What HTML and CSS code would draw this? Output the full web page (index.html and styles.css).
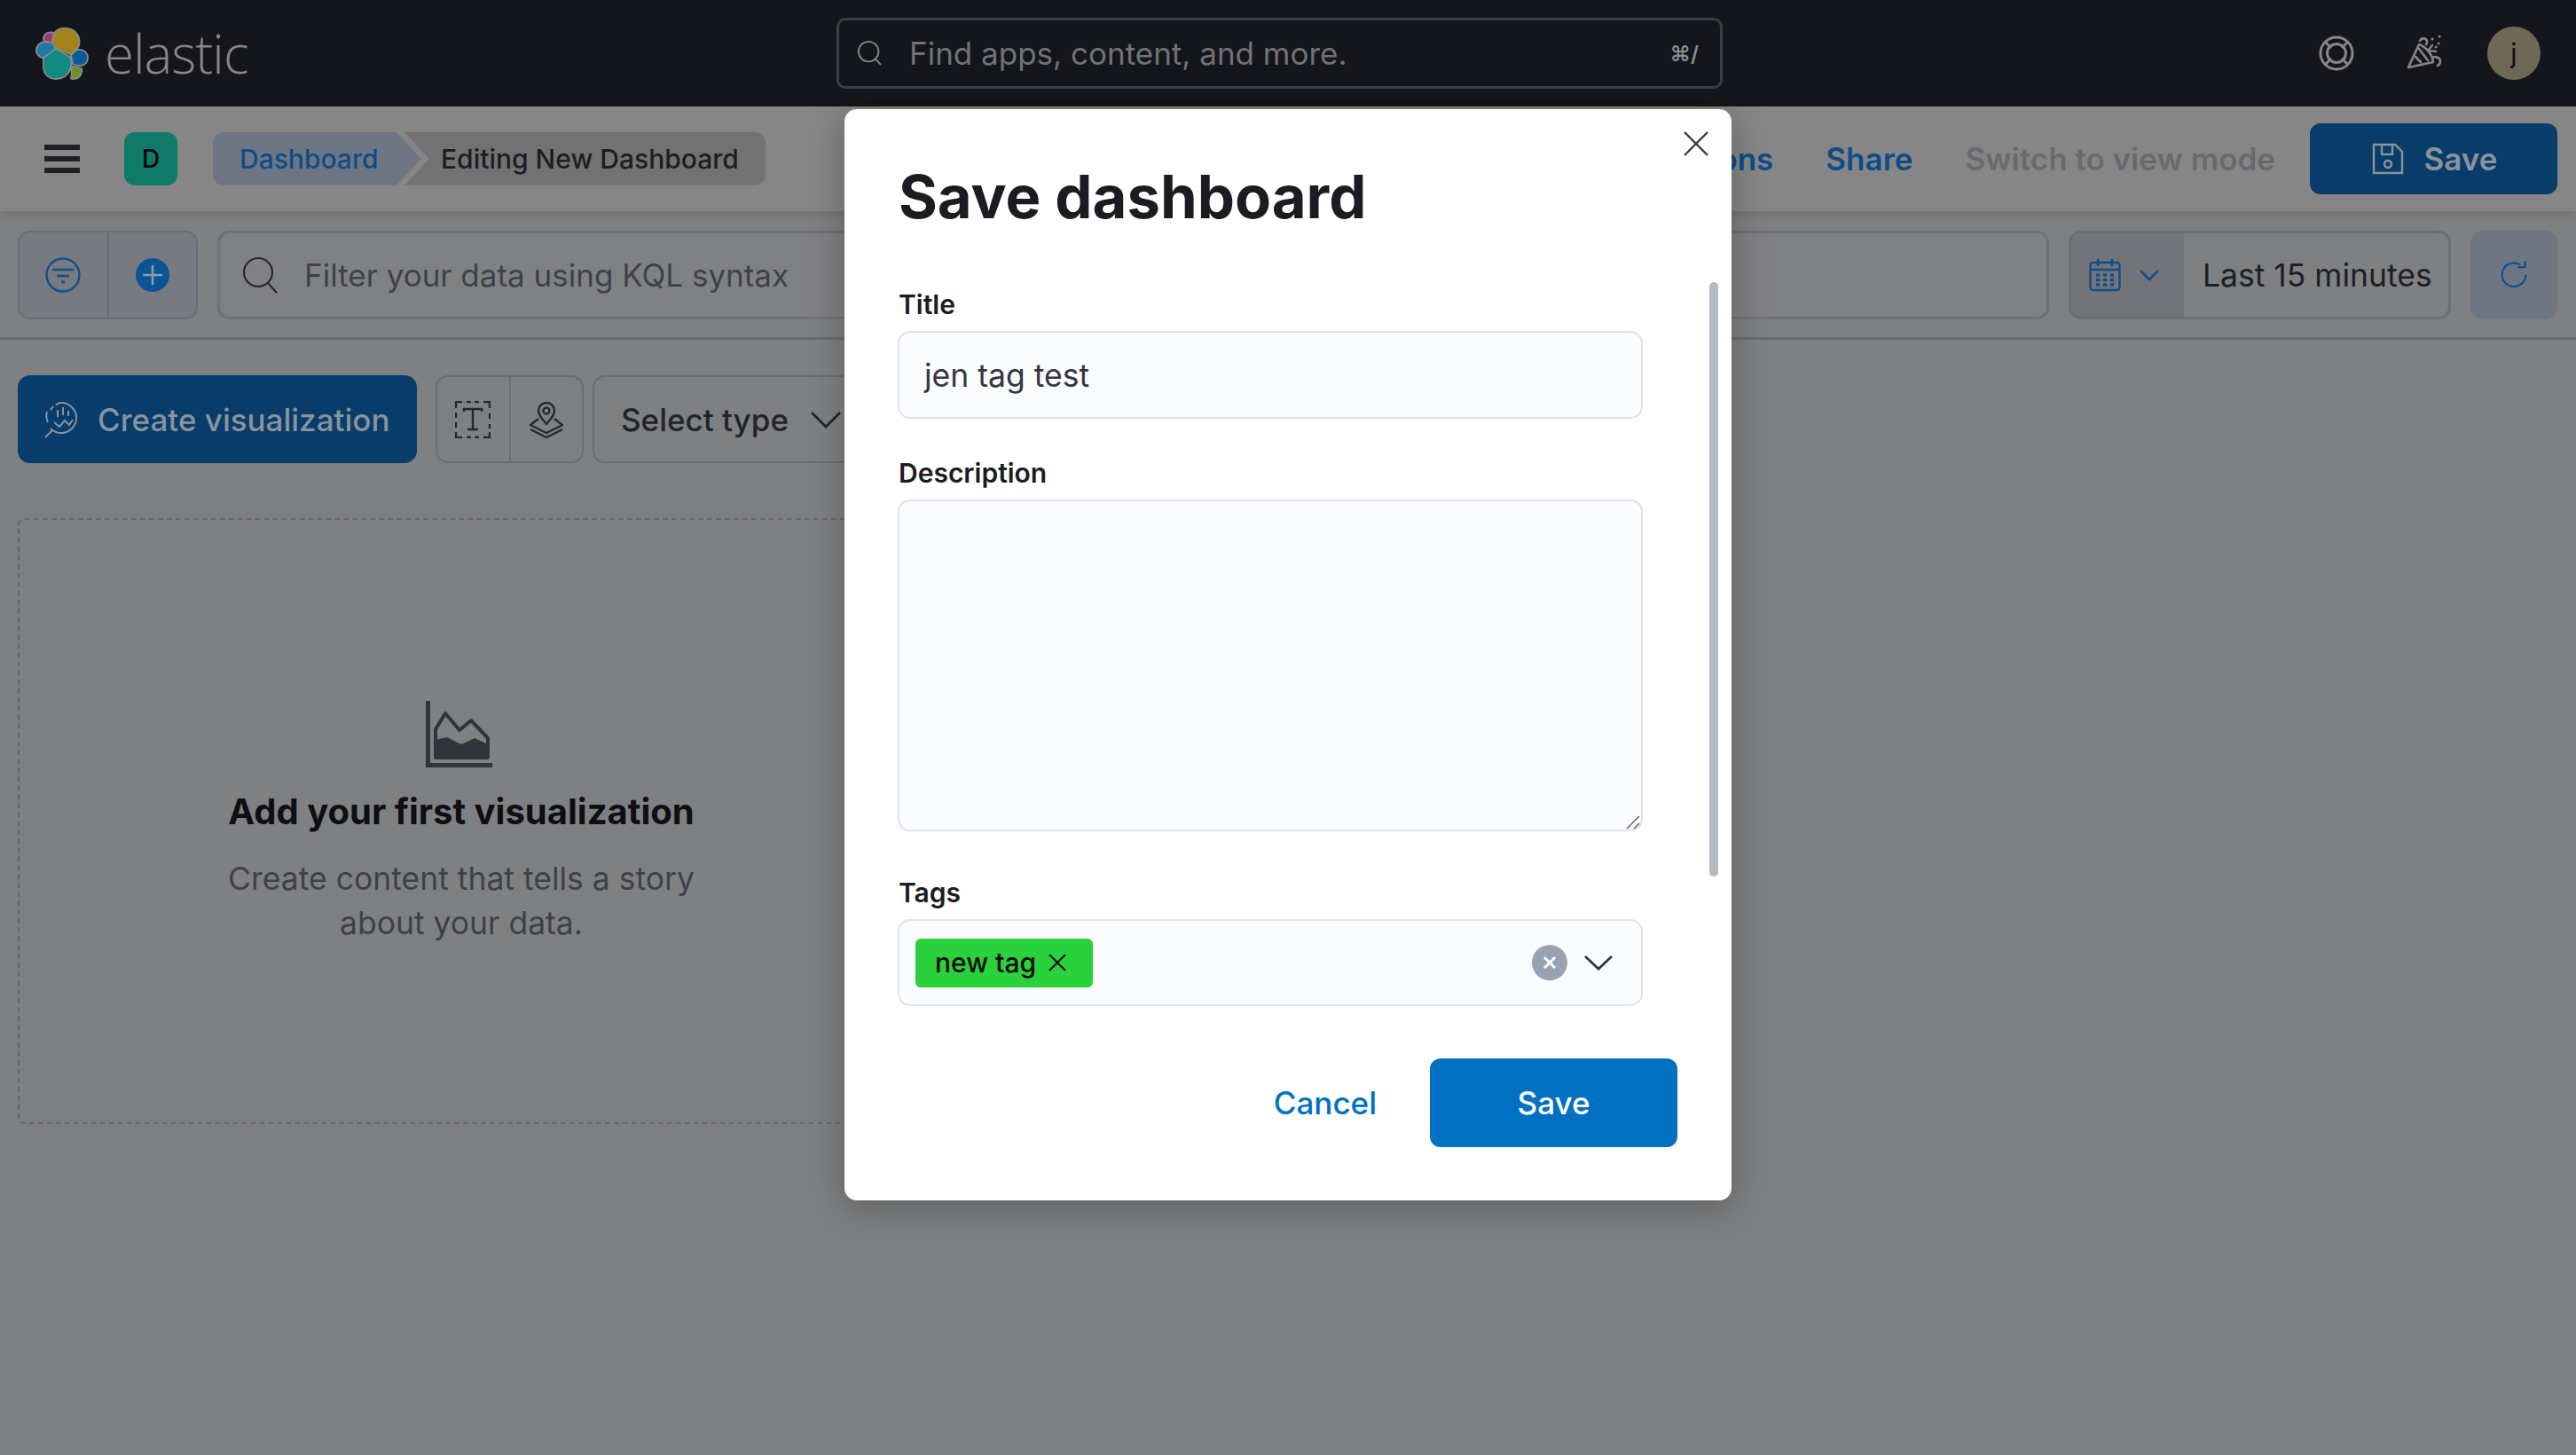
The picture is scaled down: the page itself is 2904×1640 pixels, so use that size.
FILE: index.html
```html
<!DOCTYPE html>
<html lang="en">
<head>
<meta charset="utf-8">
<title>Save dashboard</title>
<link rel="stylesheet" href="styles.css">
</head>
<body>
<header class="topbar">
  <div class="brand">
    <svg class="logo" viewBox="0 0 60 60" width="60" height="60">
      <g stroke="#8a8a8a" stroke-width="1.800" stroke-linejoin="round">
        <path fill="#9c3a78" d="M9 14c0-5 4-8 9-7.500 2 .2 3.500 1 3.500 2-2 3-3 6-3 10-3 .5-6-.5-7.500-1.500C9.500 16 9 15 9 14z"/>
        <path fill="#a5831c" d="M21 8c3-5 9-7 15-6 8 1 14 8 13.500 16-.2 4-2 7-4.500 9l-5 4.500L22 24c-3-5-3-11-1-16z"/>
        <path fill="#1f78a8" d="M1 27c0-6 5-10 10-10 3 0 6 1 9 2l3 6-9 10c-3 1-6 1-9-1-3-2-4-4-4-7z"/>
        <path fill="#0d5a9a" d="M40 32l7-6c6-1 12 3 12 9 0 6-5 10-10 9-3 0-5-1-7-2l-2-10z"/>
        <path fill="#138a80" d="M9 35l14-10 16 9c2 5 2 10 0 15-3 6-9 10-16 10C14 59 9 53 9 45c0-4 0-7 0-10z"/>
        <path fill="#6f9020" d="M40 44l12 3c1 3 0 6-2 9-2 2-5 3-8 3-1 0-2-.5-2-1 1-4 1-9 0-14z"/>
      </g>
    </svg>
    <span class="wordmark">elastic</span>
  </div>
  <div class="global-search">
    <svg class="ico-search-sm" viewBox="0 0 32 32" width="30" height="30" fill="none" stroke="#84868b" stroke-width="2"><circle cx="14" cy="14" r="12"/><path d="M22 23l7 7"/></svg>
    <span class="global-placeholder">Find apps, content, and more.</span>
    <span class="shortcut">⌘/</span>
  </div>
  <div class="top-actions">
    <svg class="help" viewBox="0 0 40 40" width="40" height="40" fill="none" stroke="#868686" stroke-width="3"><circle cx="20" cy="20" r="18"/><circle cx="20" cy="20" r="10.500"/><path d="M7 7l7 7M33 7l-7 7M7 33l7-7M33 33l-7-7"/></svg>
    <svg class="news" viewBox="0 0 42 40" width="42" height="40" fill="none" stroke="#868686" stroke-width="2.600" stroke-linejoin="round" stroke-linecap="round"><path d="M13 10L1 36l28-6c-1-9-8-17-16-20zM9 24l6 6M13 15l10 13"/><path d="M14 6c2-4 7-3 8 0 .5 2 0 3-1 4M32 18l-9-1 5-6M28 25c4-2 9 0 9 4 0 2-1 4-3 5"/><path d="M28 4h.1M36 1h.1M35 9h.1M32 13h.1" stroke-width="3"/></svg>
    <span class="avatar">j</span>
  </div>
</header>

<nav class="appbar">
  <div class="hamburger"><i></i><i></i><i></i></div>
  <span class="space-badge">D</span>
  <div class="crumbs">
    <span class="crumb crumb-link">Dashboard</span>
    <span class="crumb crumb-current">Editing New Dashboard</span>
  </div>
  <div class="app-actions">
    <span class="link">Options</span>
    <span class="link">Share</span>
    <span class="link link-muted">Switch to view mode</span>
    <span class="btn-save">
      <svg viewBox="0 0 36 36" width="36" height="36" fill="none" stroke="#89939c" stroke-width="2.400"><path d="M2 2h24l8 8v24H2z"/><path d="M11 2v11h12V2"/><circle cx="18" cy="24" r="4"/></svg>
      Save
    </span>
  </div>
</nav>

<section class="querybar">
  <div class="filter-group">
    <span class="filter-cell">
      <svg viewBox="0 0 40 40" width="40" height="40" fill="none" stroke="#114f8c" stroke-width="2.400"><circle cx="20" cy="20" r="18.500"/><path d="M8 14h24M13 21h14"/><path d="M18 28h4" stroke-width="3"/></svg>
    </span>
    <span class="filter-cell">
      <svg viewBox="0 0 40 40" width="40" height="40"><circle cx="20" cy="20" r="19" fill="#0a5596"/><path d="M20 9v22M9 20h22" stroke="#8e9aa6" stroke-width="2.600"/></svg>
    </span>
  </div>
  <div class="query-input">
    <svg viewBox="0 0 42 42" width="42" height="42" fill="none" stroke="#26282e" stroke-width="2.200"><circle cx="18" cy="18" r="16"/><path d="M29 30l10 11"/></svg>
    <span class="query-placeholder">Filter your data using KQL syntax</span>
  </div>
  <div class="datepicker">
    <span class="date-quick">
      <svg viewBox="0 0 36 38" width="36" height="38" fill="none" stroke="#0f4e8a" stroke-width="2.400"><rect x="1.500" y="5" width="33" height="31" rx="3"/><path d="M2 13h32M10 1v8M26 1v8"/><path d="M8 19h20M8 24.500h20M8 30h20" stroke-width="3.600" stroke-dasharray="4 4"/></svg>
      <svg viewBox="0 0 24 14" width="24" height="14" fill="none" stroke="#0f4e8a" stroke-width="2.600"><path d="M2 2l10 10L22 2"/></svg>
    </span>
    <span class="date-value">Last 15 minutes</span>
  </div>
  <span class="refresh">
    <svg viewBox="0 0 36 38" width="32" height="36" fill="none" stroke="#0f4e8a" stroke-width="2.400"><path d="M26 6a15 15 0 1 0 7 13"/><path d="M32 1v8H23"/></svg>
  </span>
</section>

<main class="canvas">
  <div class="toolbar">
    <span class="btn-create">
      <svg viewBox="0 0 42 42" width="42" height="42" fill="none" stroke="#89939c" stroke-width="2"><path d="M7 10a17 17 0 0 1 9-7" stroke-dasharray="5 3"/><path d="M15 2.500A17 17 0 1 1 7 31"/><path d="M3 12a17 17 0 0 0 1 12"/><path d="M9 33L1 41"/><path d="M11 24l6 5 6-7 5 5 4-6M15 10v8M21 7v9M27 11v6"/></svg>
      Create visualization
    </span>
    <div class="tool-group">
      <span class="tool-cell">
        <svg viewBox="0 0 40 42" width="40" height="42" fill="none" stroke="#25272d" stroke-width="2.400"><path d="M1 8V1h7M13 1h5M22 1h5M32 1h7v7M39 14v6M39 26v5M39 35v6h-7M27 41h-5M18 41h-5M8 41H1v-6M1 30v-6M1 19v-6"/><path d="M10 12v-3h20v3M20 9v23M14 32h12"/></svg>
      </span>
      <span class="tool-cell">
        <svg viewBox="0 0 40 42" width="40" height="42" fill="none" stroke="#25272d" stroke-width="2.400" stroke-linejoin="round"><path d="M20 26c-5-6-9-10-9-15a9 9 0 0 1 18 0c0 5-4 9-9 15z"/><circle cx="20" cy="11" r="3.500"/><path d="M11 20l-9 7 18 9 18-9-9-7"/><path d="M2 32l18 9 18-9"/></svg>
      </span>
    </div>
    <span class="select-type">
      Select type
      <svg viewBox="0 0 36 20" width="36" height="20" fill="none" stroke="#22242a" stroke-width="2.800"><path d="M2 2l16 16L34 2"/></svg>
    </span>
  </div>
  <div class="dropzone">
    <svg class="empty-icon" viewBox="0 0 75 75" width="75" height="75">
      <path d="M2.500 0v72.500H75" fill="none" stroke="#32343b" stroke-width="5"/>
      <path d="M11 64V32l11-18 16 19 13-11 19 20v22z" fill="none" stroke="#32343b" stroke-width="4" stroke-linejoin="round"/>
      <path d="M11 64V44l13-3 16 8 15-7 15 7v15z" fill="#32343b"/>
    </svg>
    <h2 class="empty-title">Add your first visualization</h2>
    <p class="empty-text">Create content that tells a story<br>about your data.</p>
  </div>
</main>

<div class="modal">
  <svg class="modal-close" viewBox="0 0 28 28" width="28" height="28" fill="none" stroke="#343741" stroke-width="2.400"><path d="M1 1l26 26M27 1L1 27"/></svg>
  <h1 class="modal-title">Save dashboard</h1>
  <div class="scroll-thumb"></div>
  <div class="modal-body">
    <label class="field-label">Title</label>
    <div class="input">jen tag test</div>
    <label class="field-label">Description</label>
    <div class="textarea">
      <svg class="resize" viewBox="0 0 16 16" width="16" height="16" fill="none" stroke="#555" stroke-width="1.300"><path d="M1 15L15 1M9 15l6-6"/></svg>
    </div>
    <label class="field-label">Tags</label>
    <div class="combo">
      <span class="tag">new tag
        <svg viewBox="0 0 20 20" width="20" height="20" fill="none" stroke="#0a0a0a" stroke-width="2"><path d="M1 1l18 18M19 1L1 19"/></svg>
      </span>
      <span class="combo-clear">
        <svg viewBox="0 0 16 16" width="16" height="16" fill="none" stroke="#fff" stroke-width="3"><path d="M2 2l12 12M14 2L2 14"/></svg>
      </span>
      <svg viewBox="0 0 34 18" width="34" height="18" fill="none" stroke="#343741" stroke-width="2.800"><path d="M2 2l15 14L32 2"/></svg>
    </div>
  </div>
  <div class="modal-footer">
    <span class="cancel">Cancel</span>
    <span class="primary">Save</span>
  </div>
</div>
</body>
</html>
```

FILE: styles.css
```css
* { box-sizing: border-box; }
html, body { margin: 0; height: 100%; }
body {
  width: 2904px;
  height: 1640px;
  overflow: hidden;
  position: relative;
  background: #7f8082;
  font-family: Inter, "Liberation Sans", sans-serif;
  font-size: 35px;
  color: #22242a;
}

/* top dark header */
.topbar {
  height: 120px;
  background: #14161b;
  display: flex;
  align-items: center;
  padding: 0 40px;
}
.brand { width: 903px; flex: none; display: flex; align-items: center; gap: 18px; }
.wordmark { font-family: "Open Sans", sans-serif; font-weight: 300; font-size: 60px; color: #878787; letter-spacing: -1px; line-height: 1; }
.global-search {
  width: 999px;
  flex: none;
  height: 80px;
  border: 3px solid #3d3f44;
  border-radius: 10px;
  display: flex;
  align-items: center;
  padding: 0 24px 0 20px;
}
.ico-search-sm { flex: none; }
.global-placeholder { margin-left: 29px; color: #717276; }
.shortcut { margin-left: auto; font-size: 24px; font-weight: 600; color: #8a8c90; }
.top-actions { margin-left: auto; display: flex; align-items: center; }
.top-actions svg { flex: none; }
.help { margin-right: 60px; }
.news { margin-right: 48px; }
.avatar {
  width: 60px;
  height: 60px;
  border-radius: 50%;
  background: #6f6857;
  color: #0c0c0c;
  display: flex;
  align-items: center;
  justify-content: center;
  font-size: 30px;
  flex: none;
}

/* application bar */
.appbar {
  height: 118px;
  background: #868686;
  display: flex;
  align-items: center;
  padding: 0 21px 0 50px;
  box-shadow: 0 4px 10px rgba(0, 0, 0, .12);
  position: relative;
}
.hamburger { width: 40px; display: flex; flex-direction: column; gap: 7px; }
.hamburger i { display: block; height: 6px; background: #1f2025; }
.space-badge {
  width: 60px;
  height: 60px;
  margin-left: 50px;
  border-radius: 12px;
  background: #0f7a68;
  color: #050505;
  display: flex;
  align-items: center;
  justify-content: center;
  font-size: 28px;
  font-weight: 500;
}
.crumbs { display: flex; margin-left: 40px; height: 60px; font-size: 30px; font-weight: 500; }
.crumb { display: flex; align-items: center; }
.crumb-link {
  width: 235px;
  padding-left: 30px;
  background: #6e7683;
  color: #0e4c87;
  border-radius: 12px 0 0 12px;
  clip-path: polygon(0 0, 207px 0, 235px 50%, 207px 100%, 0 100%);
}
.crumb-current {
  width: 407px;
  margin-left: -19px;
  padding-left: 41px;
  background: #727272;
  color: #1c1e23;
  border-radius: 0 12px 12px 0;
  clip-path: polygon(0 0, 100% 0, 100% 100%, 0 100%, 28px 50%);
}
.app-actions { margin-left: auto; display: flex; align-items: center; font-weight: 600; }
.link { color: #0e4c87; margin-right: 59px; }
.link-muted { color: #676a72; margin-right: 39px; }
.btn-save {
  width: 279px;
  height: 80px;
  border-radius: 12px;
  background: #083c6b;
  color: #89939c;
  display: flex;
  align-items: center;
  justify-content: center;
  gap: 23px;
  padding-left: 2px;
}

/* query bar */
.querybar {
  height: 145px;
  padding: 22px 21px 20px 20px;
  display: flex;
  gap: 22px;
  border-bottom: 3px solid #696b70;
}
.filter-group {
  width: 203px;
  flex: none;
  display: flex;
  border: 2px solid #6c6e74;
  border-radius: 14px;
  background: #777a80;
  overflow: hidden;
}
.filter-cell { flex: 1; display: flex; align-items: center; justify-content: center; }
.filter-cell + .filter-cell { border-left: 2px solid #6c6e74; }
.query-input {
  flex: 1;
  display: flex;
  align-items: center;
  gap: 28px;
  padding-left: 25px;
  background: #808183;
  border: 3px solid #6f7176;
  border-radius: 14px;
}
.query-placeholder { color: #3e4148; }
.datepicker {
  width: 431px;
  flex: none;
  display: flex;
  border: 3px solid #6c6e74;
  border-radius: 14px;
  overflow: hidden;
}
.date-quick {
  width: 127px;
  flex: none;
  background: #72747a;
  display: flex;
  align-items: center;
  padding-left: 20px;
  gap: 20px;
}
.date-value { display: flex; align-items: center; padding-left: 21px; white-space: nowrap; color: #1d1f24; font-size: 35.500px; }
.refresh {
  width: 98px;
  flex: none;
  background: #6e7683;
  border-radius: 14px;
  display: flex;
  align-items: center;
  justify-content: center;
}

/* canvas */
.canvas { padding: 40px 0 0 20px; }
.toolbar { display: flex; height: 99px; }
.btn-create {
  width: 450px;
  flex: none;
  background: #083c6b;
  color: #89939c;
  border-radius: 14px;
  display: flex;
  align-items: center;
  gap: 18px;
  padding-left: 30px;
  font-size: 35px;
  font-weight: 500;
}
.tool-group {
  width: 167px;
  flex: none;
  margin-left: 21px;
  display: flex;
  border: 2px solid #6c6e74;
  border-radius: 14px;
}
.tool-cell { flex: 1; display: flex; align-items: center; justify-content: center; }
.tool-cell + .tool-cell { border-left: 2px solid #6c6e74; }
.select-type {
  width: 300px;
  flex: none;
  margin-left: 10px;
  border: 2px solid #6c6e74;
  border-radius: 14px;
  display: flex;
  align-items: center;
  gap: 24px;
  padding-left: 30px;
  font-size: 35px;
  font-weight: 500;
  white-space: nowrap;
}
.dropzone {
  width: 1000px;
  height: 683px;
  margin-top: 62px;
  border: 2px dashed #68696d;
  border-radius: 8px;
  display: flex;
  flex-direction: column;
  align-items: center;
  padding-top: 204px;
}
.empty-icon { flex: none; margin-right: 6px; }
.empty-title { margin: 26px 0 0; font-size: 40px; font-weight: 700; line-height: 48px; color: #0e0f12; }
.empty-text { margin: 27px 0 0; font-size: 35.500px; line-height: 50px; text-align: center; color: #3e4148; }

/* modal */
.modal {
  position: absolute;
  left: 952px;
  top: 123px;
  width: 1000px;
  height: 1230px;
  background: #fff;
  border-radius: 14px;
  box-shadow: 0 8px 40px rgba(0, 0, 0, .28);
  padding: 58px 61px 0 61px;
  display: flex;
  flex-direction: column;
}
.modal-close { position: absolute; right: 26px; top: 25px; }
.modal-title { margin: 0; font-size: 67px; line-height: 82px; font-weight: 700; color: #1a1c21; }
.scroll-thumb {
  position: absolute;
  right: 15px;
  top: 195px;
  width: 10px;
  height: 670px;
  border-radius: 5px;
  background: #b5b9c1;
}
.modal-body { width: 840px; margin: 62px 0 0 -1px; flex: 1; display: flex; flex-direction: column; }
.field-label { font-size: 30px; font-weight: 600; line-height: 36px; color: #1a1c21; padding-left: 1px; }
.input, .textarea, .combo {
  background: #fbfcfd;
  border: 2px solid #e0e3ec;
  border-radius: 14px;
  margin-top: 12px;
}
.input {
  height: 99px;
  display: flex;
  align-items: center;
  padding: 2px 0 0 28px;
  font-size: 35.500px;
  color: #343741;
  margin-bottom: 43px;
}
.textarea { height: 374px; position: relative; margin-bottom: 51px; }
.resize { position: absolute; right: 1px; bottom: 0; }
.combo {
  height: 98px;
  display: flex;
  align-items: center;
  padding: 0 31px 0 18px;
}
.tag {
  width: 200px;
  height: 55px;
  background: #2ad13c;
  color: #0a0a0a;
  border-radius: 6px;
  display: flex;
  align-items: center;
  padding-left: 22px;
  gap: 14px;
  font-weight: 500;
  font-size: 30px;
}
.combo-clear {
  margin-left: auto;
  margin-right: 18px;
  width: 40px;
  height: 40px;
  border-radius: 50%;
  background: #98a2b3;
  display: flex;
  align-items: center;
  justify-content: center;
}
.modal-footer {
  position: absolute;
  right: 61px;
  top: 1070px;
  display: flex;
  align-items: center;
  gap: 60px;
}
.cancel { color: #0071c2; font-weight: 500; font-size: 35px; }
.primary {
  width: 279px;
  height: 100px;
  border-radius: 12px;
  background: #0071c2;
  color: #fff;
  display: flex;
  align-items: center;
  justify-content: center;
  font-weight: 500;
  font-size: 35px;
}
```
